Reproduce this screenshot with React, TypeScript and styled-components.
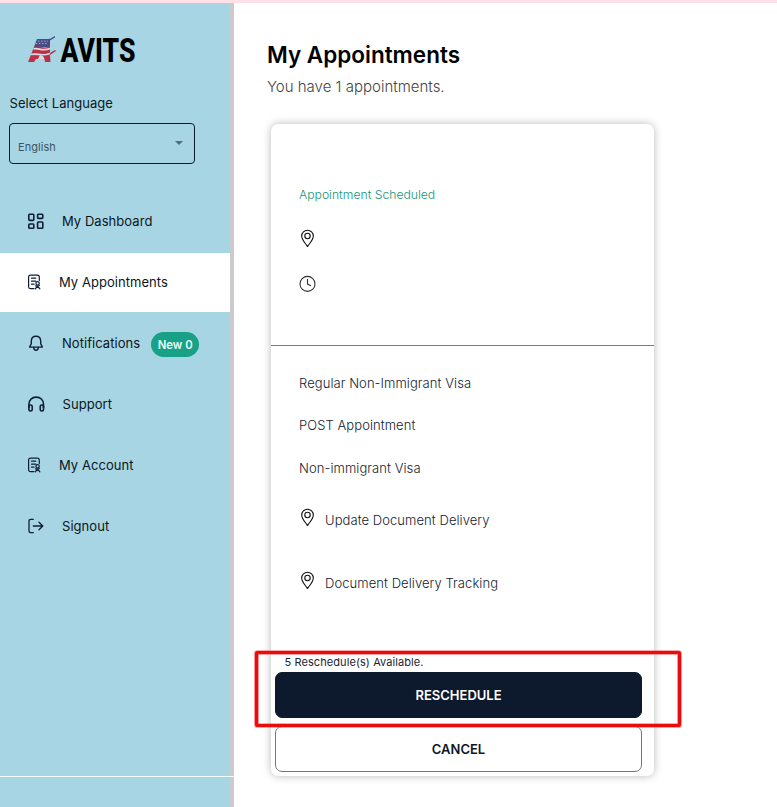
import React from 'react';
import styled, { createGlobalStyle } from 'styled-components';

const GlobalStyle = createGlobalStyle`
  *, *::before, *::after { box-sizing: border-box; }
  html, body { margin: 0; padding: 0; background: #fff; overflow: hidden; }
  body { font-family: Inter, 'Liberation Sans', sans-serif; color: #0e1a2c; }
  p, h1 { margin: 0; font-weight: 400; }
`;

const Page = styled.div`
  display: flex;
  flex-direction: column;
  width: 777px;
  height: 807px;
  overflow: hidden;
`;

const TopStrip = styled.div`
  flex: none;
  height: 3px;
  background: #ffe0e8;
`;

const Body = styled.div`
  flex: 1;
  display: flex;
  min-height: 0;
`;

const Sidebar = styled.aside`
  display: flex;
  flex-direction: column;
  flex: none;
  width: 234px;
  background: #a8d5e3;
  border-right: 4px solid #cbcbcb;
`;

const SidebarMain = styled.div`
  height: 773px;
  padding-top: 29px;
`;

const SidebarRule = styled.div`
  flex: none;
  width: 234px;
  height: 1px;
  background: #f4fbf6;
`;

const Logo = styled.svg`
  display: block;
  width: 122px;
  height: 38px;
  margin-left: 26px;
  overflow: visible;
`;

const FieldLabel = styled.label`
  display: block;
  height: 18px;
  margin: 24px 0 0 9.5px;
  font-size: 13px;
  line-height: 18px;
  letter-spacing: 0.04px;
  color: #0b1a22;
`;

const Select = styled.div`
  display: flex;
  align-items: flex-start;
  justify-content: space-between;
  width: 186px;
  height: 41px;
  margin: 11px 0 0 9px;
  padding: 15px 11px 0 8px;
  border: 1px solid #0c1a2e;
  border-radius: 4px;
  font-size: 11px;
  line-height: 16px;
  letter-spacing: 0.05px;
  color: #3b5563;
`;

const Caret = styled.svg`
  width: 8px;
  height: 4px;
  margin-top: 2px;
`;

const Nav = styled.nav`
  display: flex;
  flex-direction: column;
  gap: 2px;
  margin-top: 28px;
`;

const NavItem = styled.a<{ $active?: boolean; $indent: number }>`
  display: flex;
  align-items: center;
  height: 59px;
  padding: 0 0 1px 27px;
  background: ${(p) => (p.$active ? '#fff' : 'transparent')};
  font-size: 13px;
  line-height: 18px;
  color: #0b1620;

  svg { flex: none; width: 18px; height: 18px; }
  span { margin-left: ${(p) => p.$indent}px; }
`;

const NavText = styled.span`
  padding-bottom: 1px;
  letter-spacing: 0.05px;
`;

const Badge = styled.b`
  margin: 3px 0 0 11px;
  width: 48px;
  height: 25px;
  border-radius: 13px;
  background: #18a187;
  color: #e9fff8;
  font-size: 11.3px;
  font-weight: 600;
  line-height: 26px;
  text-align: center;
`;

const Content = styled.main`
  flex: 1;
  padding: 38px 0 0 33px;
`;

const Title = styled.h1`
  height: 28px;
  font-size: 22.5px;
  font-weight: 600;
  line-height: 28px;
  color: #000;
`;

const Subtitle = styled.p`
  height: 20px;
  margin-top: 8px;
  font-size: 15px;
  font-weight: 300;
  line-height: 20px;
  color: #444;
`;

const Card = styled.section`
  display: flex;
  flex-direction: column;
  width: 383px;
  height: 652px;
  margin: 27px 0 0 4px;
  border-radius: 7px;
  background: #fff;
  box-shadow: 0 0 8px rgba(0, 0, 0, 0.28);
`;

const Summary = styled.div`
  height: 222px;
  padding: 61px 0 0 28px;
  border-bottom: 1px solid #777b7d;
`;

const Status = styled.p`
  height: 20px;
  font-size: 12.2px;
  font-weight: 300;
  line-height: 20px;
  color: #149477;
`;

const SummaryIcons = styled.div`
  display: flex;
  flex-direction: column;
  align-items: flex-start;
  gap: 28px;
  margin-top: 24px;
`;

const Details = styled.div`
  height: 305px;
  padding: 27px 0 0 28px;
`;

const DetailLine = styled.p<{ $height: number }>`
  height: ${(p) => p.$height}px;
  font-size: 13px;
  font-weight: 300;
  line-height: 20px;
  letter-spacing: 0.07px;
  color: #131c31;
`;

const DetailLink = styled.a`
  display: flex;
  align-items: flex-start;
  gap: 9px;
  height: 63px;
  font-size: 13px;
  font-weight: 300;
  line-height: 24px;
  letter-spacing: 0.07px;
  color: #131c31;
`;

const Actions = styled.div`
  position: relative;
  display: flex;
  flex-direction: column;
  height: 125px;
  padding: 4px 12px 0 4px;
`;

const Allowance = styled.p`
  flex: none;
  height: 17px;
  padding-left: 9.5px;
  font-size: 11px;
  line-height: 14px;
  letter-spacing: 0.08px;
  color: #1a2534;
`;

const ActionButton = styled.button<{ $primary?: boolean }>`
  flex: none;
  width: 367px;
  height: 46px;
  margin: 0 0 8px;
  padding: 0;
  border: 1px solid ${(p) => (p.$primary ? '#0d192d' : '#737780')};
  border-radius: 7px;
  background: ${(p) => (p.$primary ? '#0d192d' : '#fff')};
  color: ${(p) => (p.$primary ? '#fff' : '#0e1828')};
  font: 600 13px/44px Inter, sans-serif;
`;

const Highlight = styled.div`
  position: absolute;
  top: 0;
  left: -16px;
  width: 426px;
  height: 76px;
  border: 3px solid #e90c0c;
  border-radius: 2px;
  box-shadow: 0 0 0 0.6px #ff5050, inset 0 0 0 0.6px #ff5050;
  pointer-events: none;
`;

function BrandLogo() {
  return (
    <Logo viewBox="0 -4 122 38" role="img" aria-label="AVITS">
      <path d="M11 3 L22 3 C25 3 26 1 29 0 L29 1.5 L24 4.5 L24 11 L8 11 Z" fill="#454d86" />
      <path d="M12 5.2H22M10 7.6H22" stroke="#b9c2dc" strokeWidth="1" strokeDasharray="1.3 1.8" />
      <path d="M8 11 C13 8.5 16 14 24 10 L24 17 L29 14 L30 15 L24 19 L24.5 26 L19 26 L18.5 23 L10 23 L8 26 L2 26 Z" fill="#b93245" />
      <path d="M7.5 13 C12 11 16 16 24 12.5 M5 18.5 C11 16.5 15 21 24 17.5" fill="none" stroke="#d9dce8" strokeWidth="1.7" />
      <path d="M12 23L14 19L17 20L18.5 23Z" fill="#d9dce8" />
      <text x="34.5" y="26" textLength="75" lengthAdjust="spacingAndGlyphs" fontFamily="Roboto, sans-serif" fontWeight="800" fontSize="32.5" fill="#000">AVITS</text>
    </Logo>
  );
}

const ink = '#0d1f38';

function DashboardIcon() {
  return (
    <svg viewBox="0 0 18 18" fill="none" stroke={ink} strokeWidth="1.6">
      <rect x="1.8" y="2.2" width="5" height="6.2" rx=".8" />
      <rect x="10.6" y="2.2" width="5.2" height="4.2" rx=".8" />
      <rect x="1.8" y="12" width="5" height="4.2" rx=".8" />
      <rect x="10.6" y="10" width="5.2" height="6.2" rx=".8" />
    </svg>
  );
}

function RecordIcon() {
  return (
    <svg viewBox="0 0 18 18" fill="none" stroke={ink} strokeWidth="1.2" strokeLinecap="round" strokeLinejoin="round">
      <path d="M7 15.6H3.6Q1.6 15.6 1.6 13.6V4.2Q1.6 2.2 3.6 2.2H10.3Q12.3 2.2 12.3 4.2V7.4" />
      <path d="M4.5 5.2H8.8M4.5 8.2H8.8M4.5 11.2H7" />
      <circle cx="10.6" cy="10.3" r="1.7" />
      <path d="M8.3 15.8L10.6 13L12.9 15.8M8.4 12.9L10.6 13L12.4 12.5" />
    </svg>
  );
}

function BellIcon() {
  return (
    <svg viewBox="0 0 18 18" fill="none" stroke={ink} strokeWidth="1.4" strokeLinecap="round" strokeLinejoin="round">
      <path d="M9 2.2C6 2.2 4.3 4.5 4.3 7.3V9.8L2.6 13.1H15.4L13.7 9.8V7.3C13.7 4.5 12 2.2 9 2.2Z" />
      <path d="M6.7 13.5Q6.8 16.3 9 16.3T11.3 13.5" />
    </svg>
  );
}

function HeadphonesIcon() {
  return (
    <svg viewBox="0 0 18 18" fill="none" stroke={ink} strokeWidth="1.6">
      <path d="M1.9 13V9.5C1.9 5 5 2.1 9.2 2.1S16.5 5 16.5 9.5V13" />
      <rect x="1.9" y="10" width="3.3" height="6" rx="1.6" />
      <rect x="13.2" y="10" width="3.3" height="6" rx="1.6" />
    </svg>
  );
}

function SignoutIcon() {
  return (
    <svg viewBox="0 0 18 18" fill="none" stroke={ink} strokeWidth="1.3" strokeLinecap="round" strokeLinejoin="round">
      <path d="M6.3 2.3H3.8Q2 2.3 2 4.1V13.9Q2 15.7 3.8 15.7H6.3M6.3 9H15.7M12 5.2L15.8 9L12 12.8" />
    </svg>
  );
}

function PinIcon() {
  return (
    <svg width="17" height="18" viewBox="0 0 17 18" fill="none" stroke="#111" strokeWidth="1.1">
      <path d="M8.5 17.6C6.5 14.2 2.7 11 2.7 7A5.8 5.8 0 0 1 14.3 7C14.3 11 10.5 14.2 8.5 17.6Z" />
      <circle cx="8.5" cy="7" r="2.7" />
    </svg>
  );
}

function ClockIcon() {
  return (
    <svg width="17" height="17" viewBox="0 0 17 17" fill="none" stroke="#333" strokeWidth="1.1">
      <circle cx="8.5" cy="8.9" r="7.5" />
      <path d="M8.5 4V9.1L12 10.7" />
    </svg>
  );
}

const navItems = [
  { label: 'My Dashboard', icon: <DashboardIcon />, indent: 17 },
  { label: 'My Appointments', icon: <RecordIcon />, indent: 14, active: true },
  { label: 'Notifications', icon: <BellIcon />, indent: 17, badge: 'New 0' },
  { label: 'Support', icon: <HeadphonesIcon />, indent: 17.5 },
  { label: 'My Account', icon: <RecordIcon />, indent: 14 },
  { label: 'Signout', icon: <SignoutIcon />, indent: 17 },
];

export default function App() {
  return (
    <>
      <GlobalStyle />
      <Page>
        <TopStrip />
        <Body>
          <Sidebar>
            <SidebarMain>
              <BrandLogo />
              <FieldLabel>Select Language</FieldLabel>
              <Select>
                English
                <Caret viewBox="0 0 8 4"><path d="M0 0H8L4 4Z" fill="#4f6f7c" /></Caret>
              </Select>
              <Nav>
                {navItems.map((item) => (
                  <NavItem key={item.label} $active={item.active} $indent={item.indent}>
                    {item.icon}
                    <NavText>{item.label}</NavText>
                    {item.badge && <Badge>{item.badge}</Badge>}
                  </NavItem>
                ))}
              </Nav>
            </SidebarMain>
            <SidebarRule />
          </Sidebar>
          <Content>
            <Title>My Appointments</Title>
            <Subtitle>You have 1 appointments.</Subtitle>
            <Card>
              <Summary>
                <Status>Appointment Scheduled</Status>
                <SummaryIcons>
                  <PinIcon />
                  <ClockIcon />
                </SummaryIcons>
              </Summary>
              <Details>
                <DetailLine $height={42}>Regular Non-Immigrant Visa</DetailLine>
                <DetailLine $height={43}>POST Appointment</DetailLine>
                <DetailLine $height={50}>Non-immigrant Visa</DetailLine>
                <DetailLink><PinIcon />Update Document Delivery</DetailLink>
                <DetailLink><PinIcon />Document Delivery Tracking</DetailLink>
              </Details>
              <Actions>
                <Allowance>5 Reschedule(s) Available.</Allowance>
                <ActionButton $primary>RESCHEDULE</ActionButton>
                <ActionButton>CANCEL</ActionButton>
                <Highlight />
              </Actions>
            </Card>
          </Content>
        </Body>
      </Page>
    </>
  );
}
